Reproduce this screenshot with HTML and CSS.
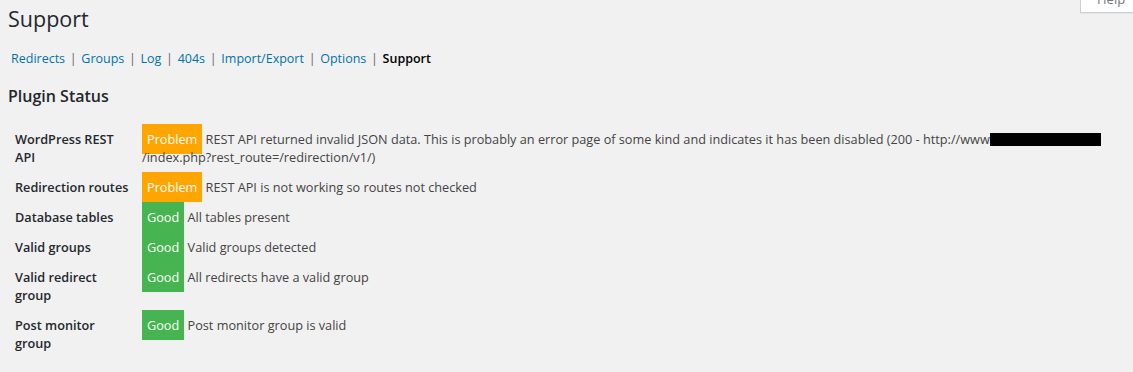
FILE: index.html
```html
<!DOCTYPE html>
<html lang="en">
<head>
<meta charset="utf-8">
<title>Support</title>
<link rel="stylesheet" href="styles.css">
</head>
<body>
<div class="help-tab"><span>Help</span></div>
<div class="wrap">
  <h1 class="title">Support</h1>
  <ul class="subnav">
    <li><a href="#">Redirects</a><span class="sep">|</span></li>
    <li><a href="#">Groups</a><span class="sep">|</span></li>
    <li><a href="#">Log</a><span class="sep">|</span></li>
    <li><a href="#">404s</a><span class="sep">|</span></li>
    <li><a href="#">Import/Export</a><span class="sep">|</span></li>
    <li><a href="#">Options</a><span class="sep">|</span></li>
    <li><a href="#" class="current">Support</a></li>
  </ul>
  <h2 class="section">Plugin Status</h2>
  <table class="status">
    <tbody>
      <tr>
        <th>WordPress REST API</th>
        <td><span class="badge problem">Problem</span> REST API returned invalid JSON data. This is probably an error page of some kind and indicates it has been disabled (200 - http://www<span class="redacted"></span><br>/index.php?rest_route=/redirection/v1/)</td>
      </tr>
      <tr>
        <th>Redirection routes</th>
        <td><span class="badge problem">Problem</span> REST API is not working so routes not checked</td>
      </tr>
      <tr>
        <th>Database tables</th>
        <td><span class="badge good">Good</span> All tables present</td>
      </tr>
      <tr>
        <th>Valid groups</th>
        <td><span class="badge good">Good</span> Valid groups detected</td>
      </tr>
      <tr>
        <th>Valid redirect group</th>
        <td><span class="badge good">Good</span> All redirects have a valid group</td>
      </tr>
      <tr>
        <th>Post monitor group</th>
        <td><span class="badge good">Good</span> Post monitor group is valid</td>
      </tr>
    </tbody>
  </table>
</div>
</body>
</html>
```
FILE: styles.css
```css
html, body {
  margin: 0;
  padding: 0;
  background: #f1f1f1;
}
body {
  font-family: "Open Sans", "Noto Sans", sans-serif;
  font-size: 12.7px;
  line-height: 18px;
  color: #444;
  position: relative;
}
.wrap {
  padding: 0 8px;
}
.title {
  margin: 4px 0 0;
  font-size: 21.5px;
  font-weight: 400;
  line-height: 29px;
  color: #23282d;
}
.subnav {
  list-style: none;
  margin: 17px 0 0 3px;
  padding: 0;
  display: flex;
  font-size: 12.5px;
  line-height: 18px;
  color: #666;
}
.subnav a {
  color: #0073aa;
  text-decoration: none;
}
.subnav a.current {
  color: #000;
  font-weight: 600;
}
.sep {
  margin: 0 4.7px;
}
.section {
  margin: 17px 0 0;
  font-size: 16px;
  font-weight: 600;
  line-height: 22px;
  color: #23282d;
}
.status {
  margin-top: 17px;
  border-collapse: collapse;
}
.status th {
  width: 117px;
  padding: 6px 10px 6px 7px;
  text-align: left;
  vertical-align: top;
  font-weight: 600;
  color: #23282d;
}
.status td {
  padding: 6px 0;
  vertical-align: top;
}
.badge {
  padding: 6px 5px;
  color: #fff;
}
.badge.problem {
  background: #ffa500;
}
.badge.good {
  background: #46b450;
}
.redacted {
  display: inline-block;
  width: 111px;
  height: 13px;
  background: #000;
  vertical-align: -2px;
}
.help-tab {
  position: absolute;
  top: 0;
  right: 0;
  width: 52px;
  height: 12px;
  overflow: hidden;
  background: #fff;
  border-left: 1px solid #ccd0d4;
  border-bottom: 1px solid #ccd0d4;
  box-shadow: 0 1px 1px rgba(0,0,0,.04);
  font-size: 13px;
  color: #72777c;
}
.help-tab span {
  display: block;
  margin-top: -10px;
  padding-left: 16px;
}
```
